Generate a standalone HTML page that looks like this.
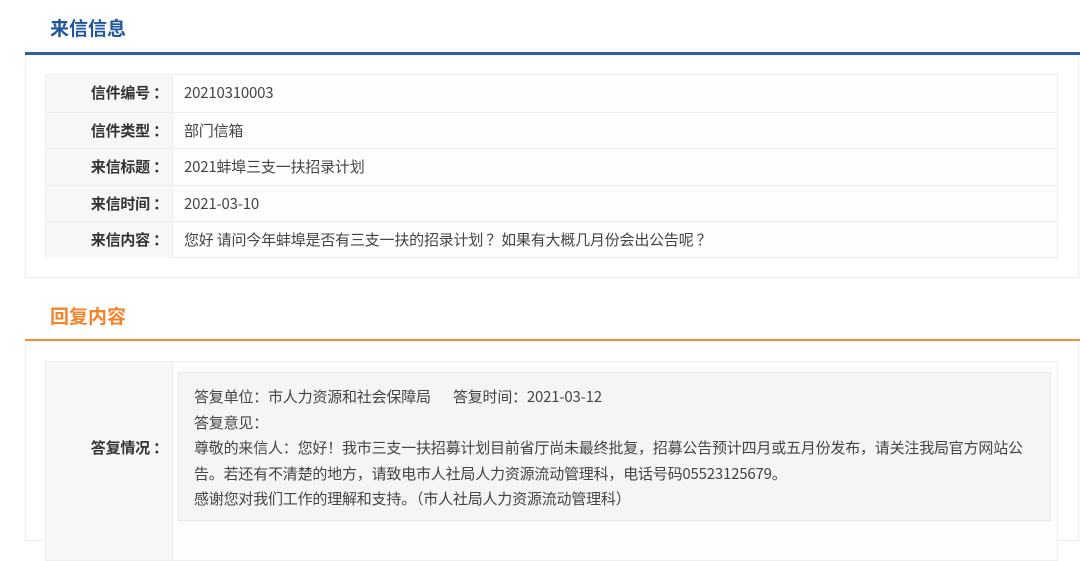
<!DOCTYPE html>
<html><head><meta charset="utf-8"><style>
*{margin:0;padding:0;box-sizing:border-box}
body{width:1080px;height:534px;overflow:hidden;background:#fff;font-family:"Noto Sans CJK SC","Liberation Sans",sans-serif;font-size:15px;letter-spacing:-0.2px;color:#444;position:relative}
.t{position:absolute;left:50px;font-size:19px;font-weight:bold;letter-spacing:0}
.line{position:absolute;left:25px;width:1055px;height:3px}
.box{position:absolute;left:25px;width:1054px;border:1px solid #eee;border-top:none}
.tbl{position:absolute;left:45px;width:1013px;border:1px solid #eee;background:#fdfdfd}
.r{position:relative;height:36.6px;border-top:1px solid #eee;line-height:35px;white-space:nowrap}
.r:first-child{border-top:none}
.l{position:absolute;left:0;top:0;bottom:0;width:127px;background:#f7f7f7;border-right:1px solid #eee;font-weight:bold;color:#333;text-align:right;padding-right:4px}
.v{position:absolute;left:138px;top:0}
.inner{position:absolute;left:178px;top:372px;width:873px;height:149px;background:#f5f5f5;border:1px solid #e8e8e8;padding:11px 0 0 15px;line-height:25.5px;color:#444}
</style></head><body>
<div class="t" style="top:14px;color:#1e57a0">来信信息</div>
<div class="line" style="top:52px;background:#2c5fa8;height:3px"></div>
<div class="box" style="top:55px;height:223px"></div>
<div class="tbl" style="top:74px;height:184px">
<div class="r"><div class="l">信件编号 ：</div><div class="v">20210310003</div></div>
<div class="r"><div class="l">信件类型 ：</div><div class="v">部门信箱</div></div>
<div class="r"><div class="l">来信标题 ：</div><div class="v">2021蚌埠三支一扶招录计划</div></div>
<div class="r"><div class="l">来信时间 ：</div><div class="v">2021-03-10</div></div>
<div class="r"><div class="l">来信内容 ：</div><div class="v">您好 请问今年蚌埠是否有三支一扶的招录计划 ？如果有大概几月份会出公告呢 ？</div></div>
</div>
<div class="t" style="top:302px;color:#f5832a">回复内容</div>
<div class="line" style="top:339px;background:#fb8b2c;height:2px"></div>
<div class="box" style="top:341px;height:200px"></div>
<div class="tbl" style="top:361px;height:200px">
<div class="l" style="line-height:172px">答复情况 ：</div>
</div>
<div class="inner">
<div>答复单位：市人力资源和社会保障局&nbsp;&nbsp;&nbsp;&nbsp;&nbsp;&nbsp;&nbsp;答复时间：2021-03-12</div>
<div>答复意见：</div>
<div style="white-space:nowrap">尊敬的来信人：您好！我市三支一扶招募计划目前省厅尚未最终批复，招募公告预计四月或五月份发布，请关注我局官方网站公</div>
<div>告。若还有不清楚的地方，请致电市人社局人力资源流动管理科，电话号码05523125679。</div>
<div>感谢您对我们工作的理解和支持。（市人社局人力资源流动管理科）</div>
</div>
</body></html>
